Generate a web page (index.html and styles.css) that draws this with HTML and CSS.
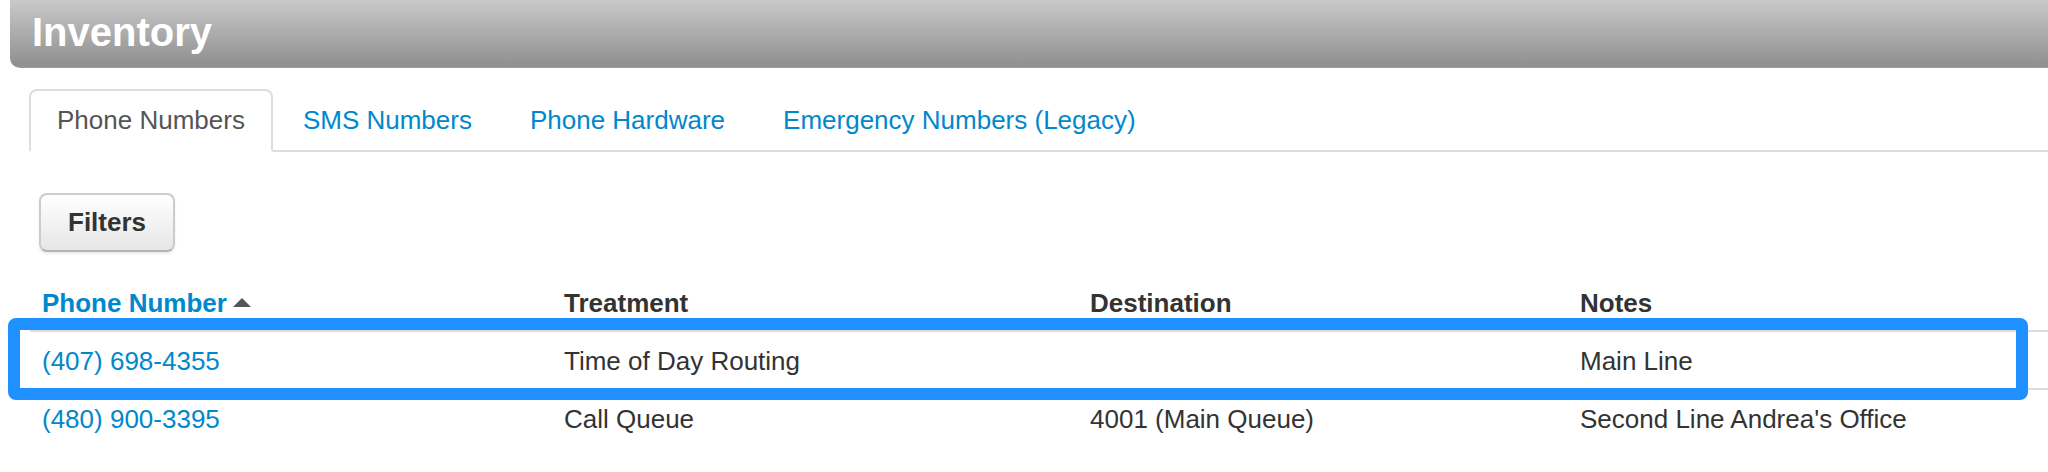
FILE: index.html
```html
<!DOCTYPE html>
<html>
<head>
<meta charset="utf-8">
<link rel="stylesheet" href="styles.css">
</head>
<body>
<header class="page-header"><h1 class="page-title">Inventory</h1></header>
<main class="content">
  <ul class="tabs">
    <li class="tab active"><a>Phone Numbers</a></li>
    <li class="tab"><a>SMS Numbers</a></li>
    <li class="tab"><a>Phone Hardware</a></li>
    <li class="tab"><a>Emergency Numbers (Legacy)</a></li>
  </ul>
  <div class="toolbar"><button class="btn">Filters</button></div>
  <div class="table-wrap">
    <table class="grid">
      <colgroup><col class="c1"><col class="c2"><col class="c3"><col></colgroup>
      <thead>
        <tr>
          <th><a class="sort">Phone Number</a><span class="caret"></span></th>
          <th>Treatment</th>
          <th>Destination</th>
          <th>Notes</th>
        </tr>
      </thead>
      <tbody>
        <tr>
          <td><a class="link">(407) 698-4355</a></td>
          <td>Time of Day Routing</td>
          <td></td>
          <td>Main Line</td>
        </tr>
        <tr>
          <td><a class="link">(480) 900-3395</a></td>
          <td>Call Queue</td>
          <td>4001 (Main Queue)</td>
          <td>Second Line Andrea's Office</td>
        </tr>
      </tbody>
    </table>
    <div class="highlight"></div>
  </div>
</main>
</body>
</html>
```
FILE: styles.css
```css
html, body {
  margin: 0;
  padding: 0;
  background: #fff;
  font-family: "Liberation Sans", Arial, sans-serif;
  color: #333;
  overflow: hidden;
}

.page-header {
  margin-left: 10px;
  height: 68px;
  box-sizing: border-box;
  background: linear-gradient(to bottom, #c9c9c9 0%, #8f8f8f 97%, #9d9d9d 100%);
  border-bottom-left-radius: 10px;
  display: flex;
  align-items: center;
  padding-left: 22px;
}

.page-title {
  margin: 0;
  font-size: 40px;
  font-weight: bold;
  color: #fff;
  line-height: 1;
  padding-bottom: 4px;
}

.content {
  padding-top: 21px;
}

.tabs {
  list-style: none;
  margin: 0 0 0 29px;
  padding: 0;
  display: flex;
  border-bottom: 2px solid #ddd;
}

.tab {
  margin-right: 2px;
  margin-bottom: -2px;
}

.tab a {
  display: block;
  padding: 14px 26px 15px;
  line-height: 30px;
  font-size: 26px;
  color: #0088cc;
  border: 2px solid transparent;
  border-radius: 8px 8px 0 0;
}

.tab.active a {
  color: #555;
  background: #fff;
  border-color: #ddd #ddd transparent #ddd;
}

.toolbar {
  padding: 41px 0 0 39px;
}

.btn {
  font-family: "Liberation Sans", Arial, sans-serif;
  font-size: 26px;
  font-weight: bold;
  color: #333;
  height: 59px;
  padding: 0 27px;
  border: 2px solid #ccc;
  border-bottom-color: #b3b3b3;
  border-radius: 8px;
  background: linear-gradient(to bottom, #ffffff, #e6e6e6);
  box-shadow: inset 0 2px 0 rgba(255,255,255,0.3), 0 2px 3px rgba(0,0,0,0.08);
}

.table-wrap {
  position: relative;
  margin-top: 22px;
  margin-left: 30px;
}

.grid {
  width: 100%;
  border-collapse: collapse;
  font-size: 26px;
}

.grid col.c1 { width: 522px; }
.grid col.c2 { width: 526px; }
.grid col.c3 { width: 490px; }

.grid th, .grid td {
  text-align: left;
  padding: 0 12px;
  box-sizing: border-box;
  white-space: nowrap;
}

.grid th {
  height: 57px;
  font-weight: bold;
  color: #333;
  vertical-align: middle;
  padding-top: 2px;
}

.grid td {
  height: 58px;
  border-top: 2px solid #ddd;
  vertical-align: middle;
  padding-top: 2px;
}

.sort, .link {
  color: #0088cc;
  text-decoration: none;
}

.caret {
  display: inline-block;
  width: 0;
  height: 0;
  margin-left: 6px;
  border-left: 9px solid transparent;
  border-right: 9px solid transparent;
  border-bottom: 9px solid #555;
  vertical-align: 5px;
}

.highlight {
  position: absolute;
  top: 44px;
  left: -22px;
  right: 20px;
  height: 82px;
  box-sizing: border-box;
  border: 12px solid #1e90ff;
  border-radius: 8px;
  pointer-events: none;
}
```
